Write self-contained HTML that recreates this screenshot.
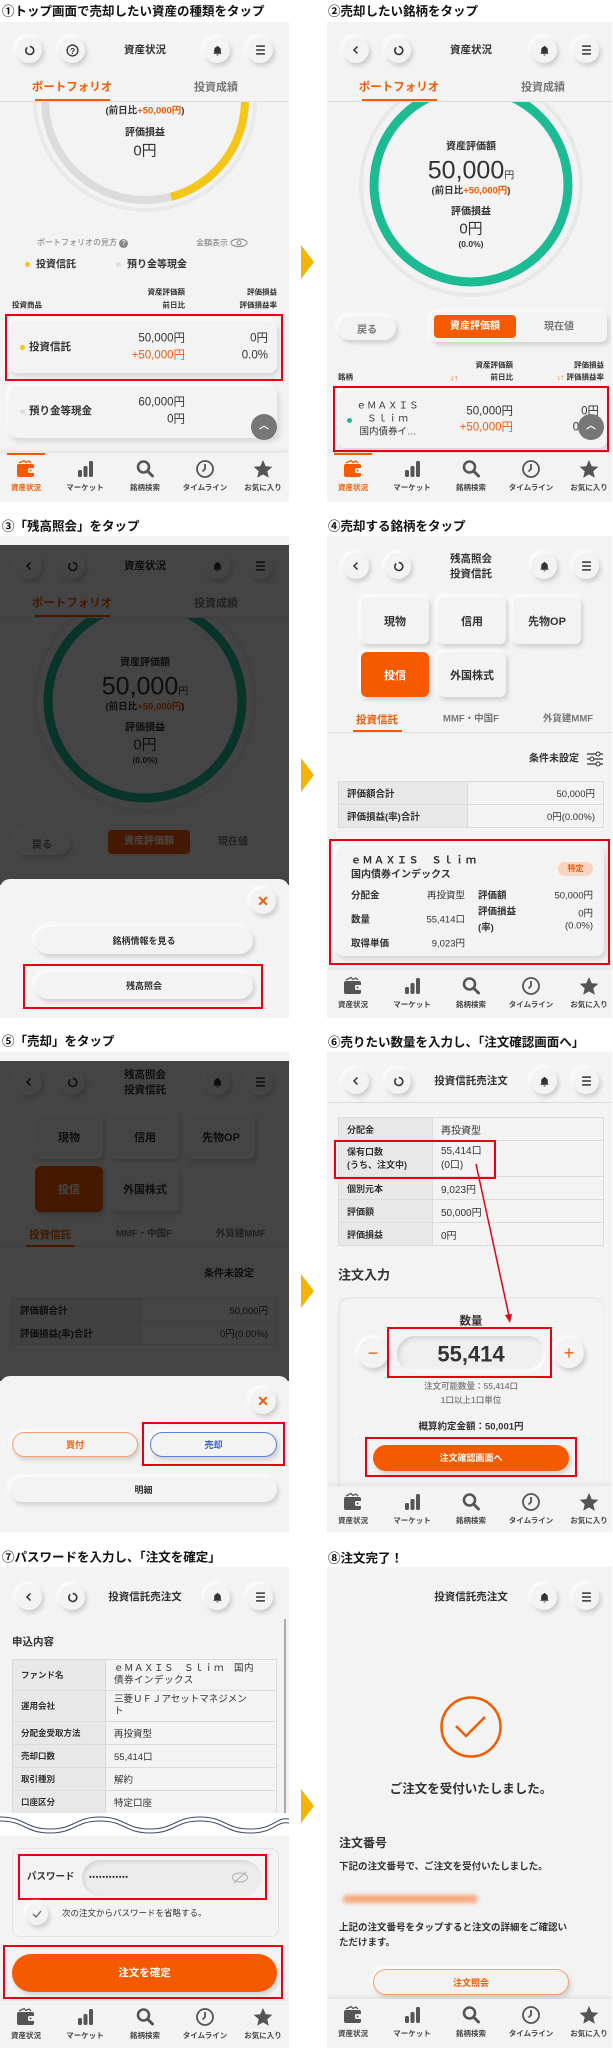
<!DOCTYPE html>
<html><head><meta charset="utf-8"><style>
body{margin:0;width:613px;height:2048px;position:relative;background:#fff;font-family:"Liberation Sans","Noto Sans CJK JP",sans-serif;color:#333;overflow:hidden}
.p{position:absolute;background:#f3f3f3;overflow:hidden}
.a{position:absolute;white-space:nowrap;line-height:1.15}
.c{transform:translate(-50%,-50%)}.l{transform:translateY(-50%)}.r{transform:translate(-100%,-50%)}
.hb{position:absolute;width:26px;height:26px;border-radius:50%;background:#f3f3f3;box-shadow:2px 3px 5px rgba(0,0,0,.16),-2px -2px 4px #fff;display:flex;align-items:center;justify-content:center;transform:translate(-50%,-50%)}
.rb{position:absolute;border:2px solid #e60012;box-sizing:border-box}
.nav{position:absolute;left:0;right:0;height:52px;background:#f3f3f3;box-shadow:0 -2px 4px rgba(0,0,0,.07)}
.ni{position:absolute;top:6px;transform:translateX(-50%);text-align:center;font-size:7.5px;color:#444;width:54px;font-weight:bold}
.ni svg{display:block;margin:0 auto 3px}
.card{position:absolute;background:#f3f3f3;border-radius:8px;box-shadow:2px 3px 6px rgba(0,0,0,.13),-2px -2px 4px #fff}
.b{font-weight:bold}.o{color:#f55a00}.g{color:#777}
.t{position:absolute;font-size:12.5px;font-weight:bold;color:#111;white-space:nowrap;transform:translateY(-50%)}
.arr{position:absolute;left:301px;width:0;height:0;border-top:17px solid transparent;border-bottom:17px solid transparent;border-left:13px solid #f5b400}
.dim{position:absolute;left:0;right:0;background:rgba(0,0,0,.72)}
.sheet{position:absolute;left:0;right:0;bottom:0;background:#f3f3f3;border-radius:10px 10px 0 0}
.pill{position:absolute;border-radius:14px;background:#f3f3f3;box-shadow:2px 3px 5px rgba(0,0,0,.15),-2px -2px 4px #fff;display:flex;align-items:center;justify-content:center;font-size:9px;font-weight:bold}
table.tb{position:absolute;border-collapse:collapse;font-size:9.5px}
table.tb td{border:1px solid #dcdcdc;padding:0 8px;height:22px}
table.tb td:first-child{background:#e8e8e8;font-weight:bold}
</style></head><body>

<!-- titles -->
<div class="t" style="left:2px;top:10px">①トップ画面で売却したい資産の種類をタップ</div>
<div class="t" style="left:328px;top:10px">②売却したい銘柄をタップ</div>
<div class="t" style="left:2px;top:525px">③「残高照会」をタップ</div>
<div class="t" style="left:328px;top:525px">④売却する銘柄をタップ</div>
<div class="t" style="left:2px;top:1040px">⑤「売却」をタップ</div>
<div class="t" style="left:328px;top:1041px">⑥売りたい数量を入力し、「注文確認画面へ」</div>
<div class="t" style="left:2px;top:1556px">⑦パスワードを入力し、「注文を確定」</div>
<div class="t" style="left:328px;top:1557px">⑧注文完了！</div>

<div class="arr" style="top:245px"></div>
<div class="arr" style="top:758px"></div>
<div class="arr" style="top:1274px"></div>
<div class="arr" style="top:1789px"></div>

<!-- ================= P1 ================= -->
<div class="p" style="left:0;top:22px;width:289px;height:480px">
<svg style="position:absolute;left:0;top:0" width="289" height="300"><circle cx="145" cy="78" r="110" fill="none" stroke="#e9e9e9" stroke-width="4"/><circle cx="145" cy="78" r="100" fill="none" stroke="#dcdcdc" stroke-width="8"/><path d="M245 78A100 100 0 0 1 171 175" fill="none" stroke="#f5c518" stroke-width="8"/></svg>
<div style="position:absolute;left:0;top:0;width:289px;height:79px;background:#f3f3f3;border-bottom:1px solid #ddd"></div>
<div class="hb" style="left:29px;top:28px"><svg width="11" height="11" viewBox="0 0 10 10"><path d="M3 2.2A3.6 3.6 0 1 0 5.2 1.4" fill="none" stroke="#333" stroke-width="1.4"/></svg></div>
<div class="hb" style="left:72px;top:28px"><svg width="13" height="13" viewBox="0 0 12 12"><circle cx="6" cy="6" r="5" fill="none" stroke="#333" stroke-width="1.2"/><text x="6" y="9" font-size="8" text-anchor="middle" font-weight="bold" fill="#333">?</text></svg></div>
<div class="a c b" style="left:145px;top:28px;font-size:10.5px">資産状況</div>
<div class="hb" style="left:217px;top:28px"><svg width="11" height="11" viewBox="0 0 10 10"><path d="M5 .8a.9.9 0 0 1 .9.9A3 3 0 0 1 8 4.8V7l1 1H1l1-1V4.8a3 3 0 0 1 2.1-3.1.9.9 0 0 1 .9-.9zM4 8.6h2a1 1 0 0 1-2 0z" fill="#333"/></svg></div>
<div class="hb" style="left:260px;top:28px"><svg width="11" height="10" viewBox="0 0 10 9"><path d="M1 1h8M1 4.5h8M1 8h8" stroke="#333" stroke-width="1.3"/></svg></div>
<div class="a c b o" style="left:72px;top:66px;font-size:11.5px">ポートフォリオ</div>
<div style="position:absolute;left:35px;top:77px;width:75px;height:2px;background:#f55a00"></div>
<div class="a c b g" style="left:216px;top:66px;font-size:11px">投資成績</div>
<div class="a c b" style="left:145px;top:90px;font-size:9.5px">(前日比<span class="o">+50,000円</span>)</div>
<div class="a c b" style="left:145px;top:111px;font-size:10px">評価損益</div>
<div class="a c" style="left:145px;top:129px;font-size:15px">0円</div>
<div class="a l g" style="left:37px;top:221px;font-size:8px">ポートフォリオの見方 <span style="display:inline-block;width:9px;height:9px;border-radius:50%;background:#888;color:#fff;font-size:7px;text-align:center;line-height:9px">?</span></div>
<div class="a l g" style="left:196px;top:221px;font-size:8px">金額表示 <svg width="18" height="9" viewBox="0 0 18 9" style="vertical-align:middle"><ellipse cx="9" cy="4.5" rx="8" ry="3.8" fill="none" stroke="#888"/><circle cx="9" cy="4.5" r="2" fill="none" stroke="#888"/></svg></div>
<div style="position:absolute;left:25px;top:240px;width:5px;height:5px;border-radius:50%;background:#f5c518"></div>
<div class="a l b" style="left:36px;top:243px;font-size:10px">投資信託</div>
<div style="position:absolute;left:116px;top:240px;width:5px;height:5px;border-radius:50%;background:#ddd"></div>
<div class="a l b" style="left:127px;top:243px;font-size:10px">預り金等現金</div>
<div class="a r b" style="left:185px;top:271px;font-size:7.5px">資産評価額</div>
<div class="a r b" style="left:185px;top:284px;font-size:7.5px">前日比</div>
<div class="a l b" style="left:12px;top:284px;font-size:7.5px">投資商品</div>
<div class="a r b" style="left:277px;top:271px;font-size:7.5px">評価損益</div>
<div class="a r b" style="left:277px;top:284px;font-size:7.5px">評価損益率</div>
<div class="card" style="left:9px;top:299px;width:268px;height:52px"></div>
<div style="position:absolute;left:20px;top:323px;width:5px;height:5px;border-radius:50%;background:#f5c518"></div>
<div class="a l b" style="left:29px;top:325px;font-size:10.5px">投資信託</div>
<div class="a r" style="left:185px;top:317px;font-size:11.5px">50,000円</div>
<div class="a r o" style="left:185px;top:334px;font-size:11.5px">+50,000円</div>
<div class="a r" style="left:268px;top:317px;font-size:11.5px">0円</div>
<div class="a r" style="left:268px;top:334px;font-size:11.5px">0.0%</div>
<div class="rb" style="left:5px;top:292px;width:278px;height:67px"></div>
<div class="card" style="left:9px;top:364px;width:268px;height:52px"></div>
<div style="position:absolute;left:20px;top:387px;width:5px;height:5px;border-radius:50%;background:#ddd"></div>
<div class="a l b" style="left:29px;top:389px;font-size:10.5px">預り金等現金</div>
<div class="a r" style="left:185px;top:381px;font-size:11.5px">60,000円</div>
<div class="a r" style="left:185px;top:398px;font-size:11.5px">0円</div>
<div style="position:absolute;left:251px;top:392px;width:26px;height:26px;border-radius:50%;background:#777;color:#fff;font-size:10px;text-align:center;line-height:26px;font-weight:bold">︿</div>
<div class="nav" style="top:431px"><div style="position:absolute;left:7px;top:0;width:38px;height:2px;background:#f55a00"></div>
<div class="ni o" style="left:26px"><svg width="22" height="20" viewBox="0 0 22 20"><path d="M4 4l5-2.5 2 2 3-1.5 2 2" fill="none" stroke="#f55a00" stroke-width="1.3"/><rect x="2" y="5" width="17" height="13" rx="2" fill="#f55a00"/><rect x="13" y="9" width="7" height="5" rx="1.5" fill="#f3f3f3"/><circle cx="15.5" cy="11.5" r="1" fill="#f55a00"/></svg>資産状況</div>
<div class="ni" style="left:85px"><svg width="22" height="20" viewBox="0 0 22 20" fill="#555"><rect x="4" y="11" width="4" height="7" rx="1.5"/><rect x="9.5" y="7" width="4" height="11" rx="1.5"/><rect x="15" y="2" width="4" height="16" rx="1.5"/></svg>マーケット</div>
<div class="ni" style="left:145px"><svg width="22" height="20" viewBox="0 0 22 20"><circle cx="9.5" cy="8" r="5.5" fill="none" stroke="#555" stroke-width="2.6"/><path d="M13.5 12l5 5" stroke="#555" stroke-width="3" stroke-linecap="round"/></svg>銘柄検索</div>
<div class="ni" style="left:205px"><svg width="22" height="20" viewBox="0 0 22 20"><circle cx="11" cy="10" r="8" fill="none" stroke="#555" stroke-width="1.8"/><path d="M11 5v5l-2.5 2.5" fill="none" stroke="#555" stroke-width="1.8"/></svg>タイムライン</div>
<div class="ni" style="left:263px"><svg width="22" height="20" viewBox="0 0 22 20"><path d="M11 1l2.7 6.2 6.7.6-5.1 4.4 1.5 6.6L11 15.4 5.2 18.8l1.5-6.6L1.6 7.8l6.7-.6z" fill="#555"/></svg>お気に入り</div></div>
</div>

<!-- ================= P2 ================= -->
<div class="p" style="left:327px;top:22px;width:285px;height:480px">
<svg style="position:absolute;left:0;top:0" width="285" height="300"><circle cx="144" cy="163" r="110" fill="none" stroke="#e8e8e8" stroke-width="4"/><circle cx="144" cy="163" r="97" fill="none" stroke="#1dbb94" stroke-width="9"/></svg>
<div style="position:absolute;left:0;top:0;width:285px;height:79px;background:#f3f3f3;border-bottom:1px solid #ddd"></div>
<div class="hb" style="left:29px;top:28px"><svg width="10" height="10" viewBox="0 0 10 10"><path d="M6.5 1.5 3 5l3.5 3.5" fill="none" stroke="#333" stroke-width="1.5"/></svg></div>
<div class="hb" style="left:71px;top:28px"><svg width="11" height="11" viewBox="0 0 10 10"><path d="M3 2.2A3.6 3.6 0 1 0 5.2 1.4" fill="none" stroke="#333" stroke-width="1.4"/></svg></div>
<div class="a c b" style="left:144px;top:28px;font-size:10.5px">資産状況</div>
<div class="hb" style="left:217px;top:28px"><svg width="11" height="11" viewBox="0 0 10 10"><path d="M5 .8a.9.9 0 0 1 .9.9A3 3 0 0 1 8 4.8V7l1 1H1l1-1V4.8a3 3 0 0 1 2.1-3.1.9.9 0 0 1 .9-.9zM4 8.6h2a1 1 0 0 1-2 0z" fill="#333"/></svg></div>
<div class="hb" style="left:259px;top:28px"><svg width="11" height="10" viewBox="0 0 10 9"><path d="M1 1h8M1 4.5h8M1 8h8" stroke="#333" stroke-width="1.3"/></svg></div>
<div class="a c b o" style="left:72px;top:66px;font-size:11.5px">ポートフォリオ</div>
<div style="position:absolute;left:35px;top:77px;width:75px;height:2px;background:#f55a00"></div>
<div class="a c b g" style="left:216px;top:66px;font-size:11px">投資成績</div>
<div class="a c b" style="left:144px;top:125px;font-size:10px">資産評価額</div>
<div class="a c" style="left:144px;top:149px;font-size:25px">50,000<span style="font-size:10px">円</span></div>
<div class="a c b" style="left:144px;top:170px;font-size:9.5px">(前日比<span class="o">+50,000円</span>)</div>
<div class="a c b" style="left:144px;top:190px;font-size:10px">評価損益</div>
<div class="a c" style="left:144px;top:207px;font-size:15px">0円</div>
<div class="a c b" style="left:144px;top:223px;font-size:8.5px">(0.0%)</div>
<div class="pill g" style="left:11px;top:294px;width:58px;height:24px;font-size:10px">戻る</div>
<div class="pill" style="left:104px;top:290px;width:176px;height:30px;border-radius:6px"></div>
<div style="position:absolute;left:107px;top:293px;width:82px;height:23px;background:#f55a00;border-radius:4px;color:#fff;font-size:10px;font-weight:bold;text-align:center;line-height:23px">資産評価額</div>
<div class="a c b g" style="left:232px;top:305px;font-size:10px">現在値</div>
<div class="a r b" style="left:186px;top:344px;font-size:7.5px">資産評価額</div>
<div class="a r b" style="left:186px;top:356px;font-size:7.5px">前日比</div>
<div class="a l b o" style="left:123px;top:356px;font-size:8px">↓↑</div>
<div class="a l b" style="left:11px;top:356px;font-size:7.5px">銘柄</div>
<div class="a r b" style="left:277px;top:344px;font-size:7.5px">評価損益</div>
<div class="a r b" style="left:277px;top:356px;font-size:7.5px"><span class="o">↓↑</span> 評価損益率</div>
<div class="card" style="left:10px;top:368px;width:270px;height:58px"></div>
<div style="position:absolute;left:20px;top:396px;width:5px;height:5px;border-radius:50%;background:#1dbb94"></div>
<div class="a c" style="left:61px;top:385px;font-size:9.5px;letter-spacing:1px">ｅＭＡＸＩＳ</div>
<div class="a c" style="left:61px;top:398px;font-size:9.5px;letter-spacing:1px">Ｓｌｉｍ</div>
<div class="a c" style="left:61px;top:411px;font-size:9.5px">国内債券イ…</div>
<div class="a r" style="left:186px;top:390px;font-size:11.5px">50,000円</div>
<div class="a r o" style="left:186px;top:406px;font-size:11.5px">+50,000円</div>
<div class="a r" style="left:272px;top:390px;font-size:11.5px">0円</div>
<div class="a r" style="left:272px;top:406px;font-size:11.5px">0.0%</div>
<div style="position:absolute;left:251px;top:392px;width:26px;height:26px;border-radius:50%;background:#777;color:#fff;font-size:10px;text-align:center;line-height:26px;font-weight:bold">︿</div>
<div class="rb" style="left:6px;top:364px;width:276px;height:66px"></div>
<div class="nav" style="top:431px"><div style="position:absolute;left:7px;top:0;width:38px;height:2px;background:#f55a00"></div>
<div class="ni o" style="left:26px"><svg width="22" height="20" viewBox="0 0 22 20"><path d="M4 4l5-2.5 2 2 3-1.5 2 2" fill="none" stroke="#f55a00" stroke-width="1.3"/><rect x="2" y="5" width="17" height="13" rx="2" fill="#f55a00"/><rect x="13" y="9" width="7" height="5" rx="1.5" fill="#f3f3f3"/><circle cx="15.5" cy="11.5" r="1" fill="#f55a00"/></svg>資産状況</div>
<div class="ni" style="left:85px"><svg width="22" height="20" viewBox="0 0 22 20" fill="#555"><rect x="4" y="11" width="4" height="7" rx="1.5"/><rect x="9.5" y="7" width="4" height="11" rx="1.5"/><rect x="15" y="2" width="4" height="16" rx="1.5"/></svg>マーケット</div>
<div class="ni" style="left:144px"><svg width="22" height="20" viewBox="0 0 22 20"><circle cx="9.5" cy="8" r="5.5" fill="none" stroke="#555" stroke-width="2.6"/><path d="M13.5 12l5 5" stroke="#555" stroke-width="3" stroke-linecap="round"/></svg>銘柄検索</div>
<div class="ni" style="left:204px"><svg width="22" height="20" viewBox="0 0 22 20"><circle cx="11" cy="10" r="8" fill="none" stroke="#555" stroke-width="1.8"/><path d="M11 5v5l-2.5 2.5" fill="none" stroke="#555" stroke-width="1.8"/></svg>タイムライン</div>
<div class="ni" style="left:262px"><svg width="22" height="20" viewBox="0 0 22 20"><path d="M11 1l2.7 6.2 6.7.6-5.1 4.4 1.5 6.6L11 15.4 5.2 18.8l1.5-6.6L1.6 7.8l6.7-.6z" fill="#555"/></svg>お気に入り</div></div>
</div>

<!-- ================= P3 ================= -->
<div class="p" style="left:0;top:536px;width:289px;height:482px">
<svg style="position:absolute;left:0;top:0" width="289" height="320"><circle cx="145" cy="165" r="110" fill="none" stroke="#e8e8e8" stroke-width="4"/><circle cx="145" cy="165" r="97" fill="none" stroke="#1dbb94" stroke-width="9"/></svg>
<div style="position:absolute;left:0;top:0;width:289px;height:81px;background:#f3f3f3;border-bottom:1px solid #ddd"></div>
<div class="hb" style="left:29px;top:30px"><svg width="10" height="10" viewBox="0 0 10 10"><path d="M6.5 1.5 3 5l3.5 3.5" fill="none" stroke="#333" stroke-width="1.5"/></svg></div>
<div class="hb" style="left:72px;top:30px"><svg width="11" height="11" viewBox="0 0 10 10"><path d="M3 2.2A3.6 3.6 0 1 0 5.2 1.4" fill="none" stroke="#333" stroke-width="1.4"/></svg></div>
<div class="a c b" style="left:145px;top:30px;font-size:10.5px">資産状況</div>
<div class="hb" style="left:217px;top:30px"><svg width="11" height="11" viewBox="0 0 10 10"><path d="M5 .8a.9.9 0 0 1 .9.9A3 3 0 0 1 8 4.8V7l1 1H1l1-1V4.8a3 3 0 0 1 2.1-3.1.9.9 0 0 1 .9-.9zM4 8.6h2a1 1 0 0 1-2 0z" fill="#333"/></svg></div>
<div class="hb" style="left:260px;top:30px"><svg width="11" height="10" viewBox="0 0 10 9"><path d="M1 1h8M1 4.5h8M1 8h8" stroke="#333" stroke-width="1.3"/></svg></div>
<div class="a c b o" style="left:72px;top:68px;font-size:11.5px">ポートフォリオ</div>
<div style="position:absolute;left:35px;top:79px;width:75px;height:2px;background:#f55a00"></div>
<div class="a c b g" style="left:216px;top:68px;font-size:11px">投資成績</div>
<div class="a c b" style="left:145px;top:127px;font-size:10px">資産評価額</div>
<div class="a c" style="left:145px;top:151px;font-size:25px">50,000<span style="font-size:10px">円</span></div>
<div class="a c b" style="left:145px;top:172px;font-size:9.5px">(前日比<span class="o">+50,000円</span>)</div>
<div class="a c b" style="left:145px;top:192px;font-size:10px">評価損益</div>
<div class="a c" style="left:145px;top:209px;font-size:15px">0円</div>
<div class="a c b" style="left:145px;top:225px;font-size:8.5px">(0.0%)</div>
<div class="pill g" style="left:14px;top:295px;width:56px;height:24px;font-size:10px">戻る</div>
<div style="position:absolute;left:108px;top:294px;width:82px;height:24px;background:#f55a00;border-radius:4px;color:#fff;font-size:10px;font-weight:bold;text-align:center;line-height:24px">資産評価額</div>
<div class="a c b g" style="left:233px;top:306px;font-size:10px">現在値</div>
<div class="dim" style="top:9px;height:340px"></div>
<div class="sheet" style="top:343px">
<div class="hb" style="left:263px;top:22px;color:#f55a00;font-size:14px;font-weight:bold">✕</div>
<div class="pill" style="left:35px;top:48px;width:218px;height:27px">銘柄情報を見る</div>
<div class="pill" style="left:35px;top:93px;width:218px;height:27px">残高照会</div>
<div class="rb" style="left:23px;top:85px;width:240px;height:45px"></div>
</div>
</div>

<!-- ================= P4 ================= -->
<div class="p" style="left:327px;top:536px;width:285px;height:482px">
<div class="hb" style="left:29px;top:30px"><svg width="10" height="10" viewBox="0 0 10 10"><path d="M6.5 1.5 3 5l3.5 3.5" fill="none" stroke="#333" stroke-width="1.5"/></svg></div>
<div class="hb" style="left:71px;top:30px"><svg width="11" height="11" viewBox="0 0 10 10"><path d="M3 2.2A3.6 3.6 0 1 0 5.2 1.4" fill="none" stroke="#333" stroke-width="1.4"/></svg></div>
<div class="a c b" style="left:144px;top:23px;font-size:10.5px">残高照会</div>
<div class="a c b" style="left:144px;top:38px;font-size:10.5px">投資信託</div>
<div class="hb" style="left:217px;top:30px"><svg width="11" height="11" viewBox="0 0 10 10"><path d="M5 .8a.9.9 0 0 1 .9.9A3 3 0 0 1 8 4.8V7l1 1H1l1-1V4.8a3 3 0 0 1 2.1-3.1.9.9 0 0 1 .9-.9zM4 8.6h2a1 1 0 0 1-2 0z" fill="#333"/></svg></div>
<div class="hb" style="left:259px;top:30px"><svg width="11" height="10" viewBox="0 0 10 9"><path d="M1 1h8M1 4.5h8M1 8h8" stroke="#333" stroke-width="1.3"/></svg></div>
<div class="pill" style="left:34px;top:61px;width:68px;height:47px;border-radius:6px;font-size:11px">現物</div>
<div class="pill" style="left:111px;top:61px;width:68px;height:47px;border-radius:6px;font-size:11px">信用</div>
<div class="pill" style="left:186px;top:61px;width:68px;height:47px;border-radius:6px;font-size:11px">先物OP</div>
<div class="pill" style="left:34px;top:116px;width:68px;height:45px;border-radius:6px;font-size:11px;background:#f55a00;color:#fff">投信</div>
<div class="pill" style="left:111px;top:116px;width:68px;height:45px;border-radius:6px;font-size:11px">外国株式</div>
<div style="position:absolute;left:0;top:196px;width:285px;height:1px;background:#ddd"></div>
<div class="a c b o" style="left:50px;top:184px;font-size:10.5px">投資信託</div>
<div style="position:absolute;left:26px;top:194px;width:49px;height:2px;background:#f55a00"></div>
<div class="a c b g" style="left:144px;top:184px;font-size:9.5px">MMF・中国F</div>
<div class="a c b g" style="left:241px;top:184px;font-size:9.5px">外貨建MMF</div>
<div class="a r b" style="left:252px;top:223px;font-size:10px">条件未設定</div>
<svg style="position:absolute;left:259px;top:215px" width="18" height="16" viewBox="0 0 18 16"><path d="M1 3h16M1 8h16M1 13h16" stroke="#333" stroke-width="1.2"/><circle cx="12" cy="3" r="2" fill="#f3f3f3" stroke="#333"/><circle cx="6" cy="8" r="2" fill="#f3f3f3" stroke="#333"/><circle cx="12" cy="13" r="2" fill="#f3f3f3" stroke="#333"/></svg>
<table class="tb" style="left:11px;top:245px;width:266px"><tr><td style="width:112px">評価額合計</td><td style="text-align:right">50,000円</td></tr><tr><td>評価損益(率)合計</td><td style="text-align:right">0円(0.00%)</td></tr></table>
<div class="card" style="left:9px;top:310px;width:268px;height:110px"></div>
<div class="a l b" style="left:24px;top:325px;font-size:10px;letter-spacing:1.5px">ｅＭＡＸＩＳ　Ｓｌｉｍ</div>
<div class="a l b" style="left:24px;top:339px;font-size:10px">国内債券インデックス</div>
<div style="position:absolute;left:231px;top:326px;width:35px;height:14px;border-radius:7px;background:#f8d5c2;color:#f55a00;font-size:8px;text-align:center;line-height:14px;font-weight:bold">特定</div>
<div class="a l b" style="left:24px;top:361px;font-size:9.5px">分配金</div>
<div class="a r" style="left:138px;top:361px;font-size:9.5px">再投資型</div>
<div class="a l b" style="left:151px;top:361px;font-size:9.5px">評価額</div>
<div class="a r" style="left:266px;top:361px;font-size:9.5px">50,000円</div>
<div class="a l b" style="left:24px;top:385px;font-size:9.5px">数量</div>
<div class="a r" style="left:138px;top:385px;font-size:9.5px">55,414口</div>
<div class="a l b" style="left:151px;top:377px;font-size:9.5px">評価損益</div>
<div class="a l b" style="left:151px;top:393px;font-size:9.5px">(率)</div>
<div class="a r" style="left:266px;top:379px;font-size:9.5px">0円</div>
<div class="a r" style="left:266px;top:391px;font-size:9.5px">(0.0%)</div>
<div class="a l b" style="left:24px;top:409px;font-size:9.5px">取得単価</div>
<div class="a r" style="left:138px;top:409px;font-size:9.5px">9,023円</div>
<div class="rb" style="left:2px;top:303px;width:281px;height:126px"></div>
<div class="nav" style="top:434px">
<div class="ni" style="left:26px"><svg width="22" height="20" viewBox="0 0 22 20"><path d="M4 4l5-2.5 2 2 3-1.5 2 2" fill="none" stroke="#555" stroke-width="1.3"/><rect x="2" y="5" width="17" height="13" rx="2" fill="#555"/><rect x="13" y="9" width="7" height="5" rx="1.5" fill="#f3f3f3"/><circle cx="15.5" cy="11.5" r="1" fill="#555"/></svg>資産状況</div>
<div class="ni" style="left:85px"><svg width="22" height="20" viewBox="0 0 22 20" fill="#555"><rect x="4" y="11" width="4" height="7" rx="1.5"/><rect x="9.5" y="7" width="4" height="11" rx="1.5"/><rect x="15" y="2" width="4" height="16" rx="1.5"/></svg>マーケット</div>
<div class="ni" style="left:144px"><svg width="22" height="20" viewBox="0 0 22 20"><circle cx="9.5" cy="8" r="5.5" fill="none" stroke="#555" stroke-width="2.6"/><path d="M13.5 12l5 5" stroke="#555" stroke-width="3" stroke-linecap="round"/></svg>銘柄検索</div>
<div class="ni" style="left:204px"><svg width="22" height="20" viewBox="0 0 22 20"><circle cx="11" cy="10" r="8" fill="none" stroke="#555" stroke-width="1.8"/><path d="M11 5v5l-2.5 2.5" fill="none" stroke="#555" stroke-width="1.8"/></svg>タイムライン</div>
<div class="ni" style="left:262px"><svg width="22" height="20" viewBox="0 0 22 20"><path d="M11 1l2.7 6.2 6.7.6-5.1 4.4 1.5 6.6L11 15.4 5.2 18.8l1.5-6.6L1.6 7.8l6.7-.6z" fill="#555"/></svg>お気に入り</div></div>
</div>

<!-- ================= P5 ================= -->
<div class="p" style="left:0;top:1052px;width:289px;height:480px">
<div class="hb" style="left:29px;top:30px"><svg width="10" height="10" viewBox="0 0 10 10"><path d="M6.5 1.5 3 5l3.5 3.5" fill="none" stroke="#333" stroke-width="1.5"/></svg></div>
<div class="hb" style="left:72px;top:30px"><svg width="11" height="11" viewBox="0 0 10 10"><path d="M3 2.2A3.6 3.6 0 1 0 5.2 1.4" fill="none" stroke="#333" stroke-width="1.4"/></svg></div>
<div class="a c b" style="left:145px;top:23px;font-size:10.5px">残高照会</div>
<div class="a c b" style="left:145px;top:38px;font-size:10.5px">投資信託</div>
<div class="hb" style="left:217px;top:30px"><svg width="11" height="11" viewBox="0 0 10 10"><path d="M5 .8a.9.9 0 0 1 .9.9A3 3 0 0 1 8 4.8V7l1 1H1l1-1V4.8a3 3 0 0 1 2.1-3.1.9.9 0 0 1 .9-.9zM4 8.6h2a1 1 0 0 1-2 0z" fill="#333"/></svg></div>
<div class="hb" style="left:260px;top:30px"><svg width="11" height="10" viewBox="0 0 10 9"><path d="M1 1h8M1 4.5h8M1 8h8" stroke="#333" stroke-width="1.3"/></svg></div>
<div class="pill" style="left:35px;top:62px;width:68px;height:45px;border-radius:6px;font-size:11px">現物</div>
<div class="pill" style="left:111px;top:62px;width:68px;height:45px;border-radius:6px;font-size:11px">信用</div>
<div class="pill" style="left:187px;top:62px;width:68px;height:45px;border-radius:6px;font-size:11px">先物OP</div>
<div class="pill" style="left:35px;top:114px;width:68px;height:46px;border-radius:6px;font-size:11px;background:#f55a00;color:#fff">投信</div>
<div class="pill" style="left:111px;top:114px;width:68px;height:46px;border-radius:6px;font-size:11px">外国株式</div>
<div style="position:absolute;left:0;top:194px;width:289px;height:1px;background:#ddd"></div>
<div class="a c b o" style="left:50px;top:183px;font-size:10.5px">投資信託</div>
<div style="position:absolute;left:26px;top:193px;width:49px;height:2px;background:#f55a00"></div>
<div class="a c b g" style="left:144px;top:183px;font-size:9.5px">MMF・中国F</div>
<div class="a c b g" style="left:241px;top:183px;font-size:9.5px">外貨建MMF</div>
<div class="a r b" style="left:254px;top:222px;font-size:10px">条件未設定</div>
<table class="tb" style="left:11px;top:246px;width:266px"><tr><td style="width:112px">評価額合計</td><td style="text-align:right">50,000円</td></tr><tr><td>評価損益(率)合計</td><td style="text-align:right">0円(0.00%)</td></tr></table>
<div class="dim" style="top:9px;height:320px"></div>
<div class="sheet" style="top:324px">
<div class="hb" style="left:263px;top:25px;color:#f55a00;font-size:14px;font-weight:bold">✕</div>
<div class="pill o" style="left:12px;top:56px;width:126px;height:25px;border:1.5px solid #f7a070;box-sizing:border-box">買付</div>
<div class="pill" style="left:150px;top:56px;width:127px;height:25px;border:1.5px solid #5b7fdc;box-sizing:border-box;color:#3a5fc8">売却</div>
<div class="rb" style="left:142px;top:46px;width:143px;height:44px"></div>
<div class="pill" style="left:10px;top:101px;width:267px;height:25px">明細</div>
</div>
</div>

<!-- ================= P6 ================= -->
<div class="p" style="left:327px;top:1052px;width:285px;height:480px">
<div style="position:absolute;left:0;top:0;width:285px;height:50px;border-bottom:1px solid #ddd"></div>
<div class="hb" style="left:29px;top:29px"><svg width="10" height="10" viewBox="0 0 10 10"><path d="M6.5 1.5 3 5l3.5 3.5" fill="none" stroke="#333" stroke-width="1.5"/></svg></div>
<div class="hb" style="left:71px;top:29px"><svg width="11" height="11" viewBox="0 0 10 10"><path d="M3 2.2A3.6 3.6 0 1 0 5.2 1.4" fill="none" stroke="#333" stroke-width="1.4"/></svg></div>
<div class="a c b" style="left:144px;top:29px;font-size:10.5px">投資信託売注文</div>
<div class="hb" style="left:217px;top:29px"><svg width="11" height="11" viewBox="0 0 10 10"><path d="M5 .8a.9.9 0 0 1 .9.9A3 3 0 0 1 8 4.8V7l1 1H1l1-1V4.8a3 3 0 0 1 2.1-3.1.9.9 0 0 1 .9-.9zM4 8.6h2a1 1 0 0 1-2 0z" fill="#333"/></svg></div>
<div class="hb" style="left:259px;top:29px"><svg width="11" height="10" viewBox="0 0 10 9"><path d="M1 1h8M1 4.5h8M1 8h8" stroke="#333" stroke-width="1.3"/></svg></div>
<table class="tb" style="left:11px;top:65px;width:266px;font-size:9px"><tr><td style="width:77px">分配金</td><td style="font-size:10px">再投資型</td></tr><tr><td style="height:35px;line-height:1.35">保有口数<br>(うち、注文中)</td><td style="font-size:10px;line-height:1.35">55,414口<br>(0口)</td></tr><tr><td>個別元本</td><td style="font-size:10px">9,023円</td></tr><tr><td>評価額</td><td style="font-size:10px">50,000円</td></tr><tr><td>評価損益</td><td style="font-size:10px">0円</td></tr></table>
<div class="rb" style="left:7px;top:88px;width:162px;height:39px"></div>
<div class="a l b" style="left:11px;top:224px;font-size:13px">注文入力</div>
<div class="card" style="left:11px;top:245px;width:266px;height:240px;border-radius:10px;box-shadow:inset 1px 1px 3px rgba(0,0,0,.08)"></div>
<div class="a c b" style="left:144px;top:270px;font-size:11.5px">数量</div>
<div class="hb" style="left:46px;top:301px;width:30px;height:30px;color:#f55a00;font-size:18px">−</div>
<div class="hb" style="left:242px;top:301px;width:30px;height:30px;color:#f55a00;font-size:18px">+</div>
<div style="position:absolute;left:70px;top:284px;width:149px;height:36px;border-radius:18px;background:#efefef;box-shadow:inset 2px 2px 4px rgba(0,0,0,.12),inset -2px -2px 3px #fff"></div>
<div class="a c" style="left:144px;top:302px;font-size:22px;font-weight:bold;color:#333">55,414</div>
<div class="rb" style="left:60px;top:275px;width:165px;height:51px"></div>
<div class="a c b" style="left:144px;top:335px;font-size:8.5px;color:#888">注文可能数量：55,414口</div>
<div class="a c b" style="left:144px;top:349px;font-size:8.5px;color:#888">1口以上1口単位</div>
<div class="a c b" style="left:144px;top:376px;font-size:9.5px">概算約定金額：50,001円</div>
<div style="position:absolute;left:46px;top:393px;width:196px;height:26px;border-radius:13px;background:#f55a00;color:#fff;font-size:9px;font-weight:bold;text-align:center;line-height:26px;box-shadow:2px 3px 5px rgba(0,0,0,.15)">注文確認画面へ</div>
<div class="rb" style="left:38px;top:385px;width:212px;height:40px"></div>
<svg style="position:absolute;left:0;top:0" width="285" height="300"><path d="M149 112L182 264" stroke="#e60012" stroke-width="1.5"/><path d="M178 263l5 8 2-9z" fill="#e60012"/></svg>
<div class="nav" style="top:434px">
<div class="ni" style="left:26px"><svg width="22" height="20" viewBox="0 0 22 20"><path d="M4 4l5-2.5 2 2 3-1.5 2 2" fill="none" stroke="#555" stroke-width="1.3"/><rect x="2" y="5" width="17" height="13" rx="2" fill="#555"/><rect x="13" y="9" width="7" height="5" rx="1.5" fill="#f3f3f3"/><circle cx="15.5" cy="11.5" r="1" fill="#555"/></svg>資産状況</div>
<div class="ni" style="left:85px"><svg width="22" height="20" viewBox="0 0 22 20" fill="#555"><rect x="4" y="11" width="4" height="7" rx="1.5"/><rect x="9.5" y="7" width="4" height="11" rx="1.5"/><rect x="15" y="2" width="4" height="16" rx="1.5"/></svg>マーケット</div>
<div class="ni" style="left:144px"><svg width="22" height="20" viewBox="0 0 22 20"><circle cx="9.5" cy="8" r="5.5" fill="none" stroke="#555" stroke-width="2.6"/><path d="M13.5 12l5 5" stroke="#555" stroke-width="3" stroke-linecap="round"/></svg>銘柄検索</div>
<div class="ni" style="left:204px"><svg width="22" height="20" viewBox="0 0 22 20"><circle cx="11" cy="10" r="8" fill="none" stroke="#555" stroke-width="1.8"/><path d="M11 5v5l-2.5 2.5" fill="none" stroke="#555" stroke-width="1.8"/></svg>タイムライン</div>
<div class="ni" style="left:262px"><svg width="22" height="20" viewBox="0 0 22 20"><path d="M11 1l2.7 6.2 6.7.6-5.1 4.4 1.5 6.6L11 15.4 5.2 18.8l1.5-6.6L1.6 7.8l6.7-.6z" fill="#555"/></svg>お気に入り</div></div>
</div>

<!-- ================= P7 ================= -->
<div class="p" style="left:0;top:1567px;width:289px;height:481px">
<div class="hb" style="left:29px;top:30px"><svg width="10" height="10" viewBox="0 0 10 10"><path d="M6.5 1.5 3 5l3.5 3.5" fill="none" stroke="#333" stroke-width="1.5"/></svg></div>
<div class="hb" style="left:72px;top:30px"><svg width="11" height="11" viewBox="0 0 10 10"><path d="M3 2.2A3.6 3.6 0 1 0 5.2 1.4" fill="none" stroke="#333" stroke-width="1.4"/></svg></div>
<div class="a c b" style="left:145px;top:30px;font-size:10.5px">投資信託売注文</div>
<div class="hb" style="left:217px;top:30px"><svg width="11" height="11" viewBox="0 0 10 10"><path d="M5 .8a.9.9 0 0 1 .9.9A3 3 0 0 1 8 4.8V7l1 1H1l1-1V4.8a3 3 0 0 1 2.1-3.1.9.9 0 0 1 .9-.9zM4 8.6h2a1 1 0 0 1-2 0z" fill="#333"/></svg></div>
<div class="hb" style="left:260px;top:30px"><svg width="11" height="10" viewBox="0 0 10 9"><path d="M1 1h8M1 4.5h8M1 8h8" stroke="#333" stroke-width="1.3"/></svg></div>
<div style="position:absolute;left:284px;top:52px;width:2px;height:194px;background:#aaa"></div>
<div class="a l b" style="left:12px;top:75px;font-size:10.5px">申込内容</div>
<table class="tb" style="left:12px;top:92px;width:265px;font-size:8.5px"><tr><td style="width:76px;height:30px">ファンド名</td><td style="font-size:9.5px;line-height:1.25;letter-spacing:.5px">ｅＭＡＸＩＳ　Ｓｌｉｍ　国内<br>債券インデックス</td></tr><tr><td style="height:30px">運用会社</td><td style="font-size:9.5px;line-height:1.25">三菱ＵＦＪアセットマネジメン<br>ト</td></tr><tr><td>分配金受取方法</td><td style="font-size:9.5px">再投資型</td></tr><tr><td>売却口数</td><td style="font-size:9.5px">55,414口</td></tr><tr><td>取引種別</td><td style="font-size:9.5px">解約</td></tr><tr><td>口座区分</td><td style="font-size:9.5px">特定口座</td></tr></table>
<div style="position:absolute;left:0;top:246px;width:289px;height:23px;background:#fff"></div>
<svg style="position:absolute;left:0;top:246px" width="289" height="23"><path d="M0 4C25 4 25 16 50 16S75 4 100 4 125 16 150 16 175 4 200 4 225 16 250 16 275 4 289 6" fill="none" stroke="#3b4a6b" stroke-width="1"/><path d="M0 8C25 8 25 20 50 20S75 8 100 8 125 20 150 20 175 8 200 8 225 20 250 20 275 8 289 10" fill="none" stroke="#3b4a6b" stroke-width="1"/></svg>
<div class="card" style="left:12px;top:281px;width:265px;height:87px;box-shadow:none;border:1px solid #e2e2e2"></div>
<div class="a l b" style="left:27px;top:311px;font-size:9.5px">パスワード</div>
<div style="position:absolute;left:82px;top:293px;width:179px;height:36px;border-radius:18px;background:#ececec;box-shadow:inset 2px 2px 4px rgba(0,0,0,.1)"></div>
<div class="a l" style="left:89px;top:310px;font-size:8px;letter-spacing:.5px">••••••••••••</div>
<svg style="position:absolute;left:231px;top:304px" width="18" height="13" viewBox="0 0 18 13"><ellipse cx="9" cy="6.5" rx="7.5" ry="4.5" fill="none" stroke="#bbb" stroke-width="1.2"/><path d="M3 12L15 1" stroke="#bbb" stroke-width="1.2"/></svg>
<div class="rb" style="left:18px;top:287px;width:249px;height:46px"></div>
<div class="hb" style="left:37px;top:347px;width:22px;height:22px"><svg width="10" height="8" viewBox="0 0 10 8"><path d="M1 4l3 3 5-6" fill="none" stroke="#666" stroke-width="1.3"/></svg></div>
<div class="a l" style="left:62px;top:347px;font-size:8.5px">次の注文からパスワードを省略する。</div>
<div style="position:absolute;left:12px;top:387px;width:265px;height:38px;border-radius:19px;background:#f55a00;color:#fff;font-size:10.5px;font-weight:bold;text-align:center;line-height:38px;box-shadow:2px 3px 5px rgba(0,0,0,.15)">注文を確定</div>
<div class="rb" style="left:3px;top:378px;width:280px;height:54px"></div>
<div class="nav" style="top:434px">
<div class="ni" style="left:26px"><svg width="22" height="20" viewBox="0 0 22 20"><path d="M4 4l5-2.5 2 2 3-1.5 2 2" fill="none" stroke="#555" stroke-width="1.3"/><rect x="2" y="5" width="17" height="13" rx="2" fill="#555"/><rect x="13" y="9" width="7" height="5" rx="1.5" fill="#f3f3f3"/><circle cx="15.5" cy="11.5" r="1" fill="#555"/></svg>資産状況</div>
<div class="ni" style="left:85px"><svg width="22" height="20" viewBox="0 0 22 20" fill="#555"><rect x="4" y="11" width="4" height="7" rx="1.5"/><rect x="9.5" y="7" width="4" height="11" rx="1.5"/><rect x="15" y="2" width="4" height="16" rx="1.5"/></svg>マーケット</div>
<div class="ni" style="left:145px"><svg width="22" height="20" viewBox="0 0 22 20"><circle cx="9.5" cy="8" r="5.5" fill="none" stroke="#555" stroke-width="2.6"/><path d="M13.5 12l5 5" stroke="#555" stroke-width="3" stroke-linecap="round"/></svg>銘柄検索</div>
<div class="ni" style="left:205px"><svg width="22" height="20" viewBox="0 0 22 20"><circle cx="11" cy="10" r="8" fill="none" stroke="#555" stroke-width="1.8"/><path d="M11 5v5l-2.5 2.5" fill="none" stroke="#555" stroke-width="1.8"/></svg>タイムライン</div>
<div class="ni" style="left:263px"><svg width="22" height="20" viewBox="0 0 22 20"><path d="M11 1l2.7 6.2 6.7.6-5.1 4.4 1.5 6.6L11 15.4 5.2 18.8l1.5-6.6L1.6 7.8l6.7-.6z" fill="#555"/></svg>お気に入り</div></div>
</div>

<!-- ================= P8 ================= -->
<div class="p" style="left:327px;top:1567px;width:285px;height:481px">
<div class="a c b" style="left:144px;top:30px;font-size:10.5px">投資信託売注文</div>
<div class="hb" style="left:217px;top:30px"><svg width="11" height="11" viewBox="0 0 10 10"><path d="M5 .8a.9.9 0 0 1 .9.9A3 3 0 0 1 8 4.8V7l1 1H1l1-1V4.8a3 3 0 0 1 2.1-3.1.9.9 0 0 1 .9-.9zM4 8.6h2a1 1 0 0 1-2 0z" fill="#333"/></svg></div>
<div class="hb" style="left:259px;top:30px"><svg width="11" height="10" viewBox="0 0 10 9"><path d="M1 1h8M1 4.5h8M1 8h8" stroke="#333" stroke-width="1.3"/></svg></div>
<svg style="position:absolute;left:112px;top:128px" width="64" height="64" viewBox="0 0 64 64"><circle cx="32" cy="32" r="29.5" fill="none" stroke="#f55a00" stroke-width="2.5"/><path d="M17 31l10 10 19-19" fill="none" stroke="#f55a00" stroke-width="2.5"/></svg>
<div class="a c b" style="left:144px;top:222px;font-size:12.5px">ご注文を受付いたしました。</div>
<div class="a l b" style="left:12px;top:277px;font-size:12px">注文番号</div>
<div class="a l b" style="left:12px;top:301px;font-size:9.5px">下記の注文番号で、ご注文を受付いたしました。</div>
<div style="position:absolute;left:16px;top:328px;width:135px;height:8px;border-radius:4px;background:#f5a77a;filter:blur(2px)"></div>
<div class="a l b" style="left:12px;top:362px;font-size:9.5px">上記の注文番号をタップすると注文の詳細をご確認い</div>
<div class="a l b" style="left:12px;top:377px;font-size:9.5px">ただけます。</div>
<div class="pill o" style="left:46px;top:402px;width:196px;height:26px;border:1.5px solid #f7a070;box-sizing:border-box">注文照会</div>
<div class="nav" style="top:432px">
<div class="ni" style="left:26px"><svg width="22" height="20" viewBox="0 0 22 20"><path d="M4 4l5-2.5 2 2 3-1.5 2 2" fill="none" stroke="#555" stroke-width="1.3"/><rect x="2" y="5" width="17" height="13" rx="2" fill="#555"/><rect x="13" y="9" width="7" height="5" rx="1.5" fill="#f3f3f3"/><circle cx="15.5" cy="11.5" r="1" fill="#555"/></svg>資産状況</div>
<div class="ni" style="left:85px"><svg width="22" height="20" viewBox="0 0 22 20" fill="#555"><rect x="4" y="11" width="4" height="7" rx="1.5"/><rect x="9.5" y="7" width="4" height="11" rx="1.5"/><rect x="15" y="2" width="4" height="16" rx="1.5"/></svg>マーケット</div>
<div class="ni" style="left:144px"><svg width="22" height="20" viewBox="0 0 22 20"><circle cx="9.5" cy="8" r="5.5" fill="none" stroke="#555" stroke-width="2.6"/><path d="M13.5 12l5 5" stroke="#555" stroke-width="3" stroke-linecap="round"/></svg>銘柄検索</div>
<div class="ni" style="left:204px"><svg width="22" height="20" viewBox="0 0 22 20"><circle cx="11" cy="10" r="8" fill="none" stroke="#555" stroke-width="1.8"/><path d="M11 5v5l-2.5 2.5" fill="none" stroke="#555" stroke-width="1.8"/></svg>タイムライン</div>
<div class="ni" style="left:262px"><svg width="22" height="20" viewBox="0 0 22 20"><path d="M11 1l2.7 6.2 6.7.6-5.1 4.4 1.5 6.6L11 15.4 5.2 18.8l1.5-6.6L1.6 7.8l6.7-.6z" fill="#555"/></svg>お気に入り</div></div>
</div>

</body></html>
